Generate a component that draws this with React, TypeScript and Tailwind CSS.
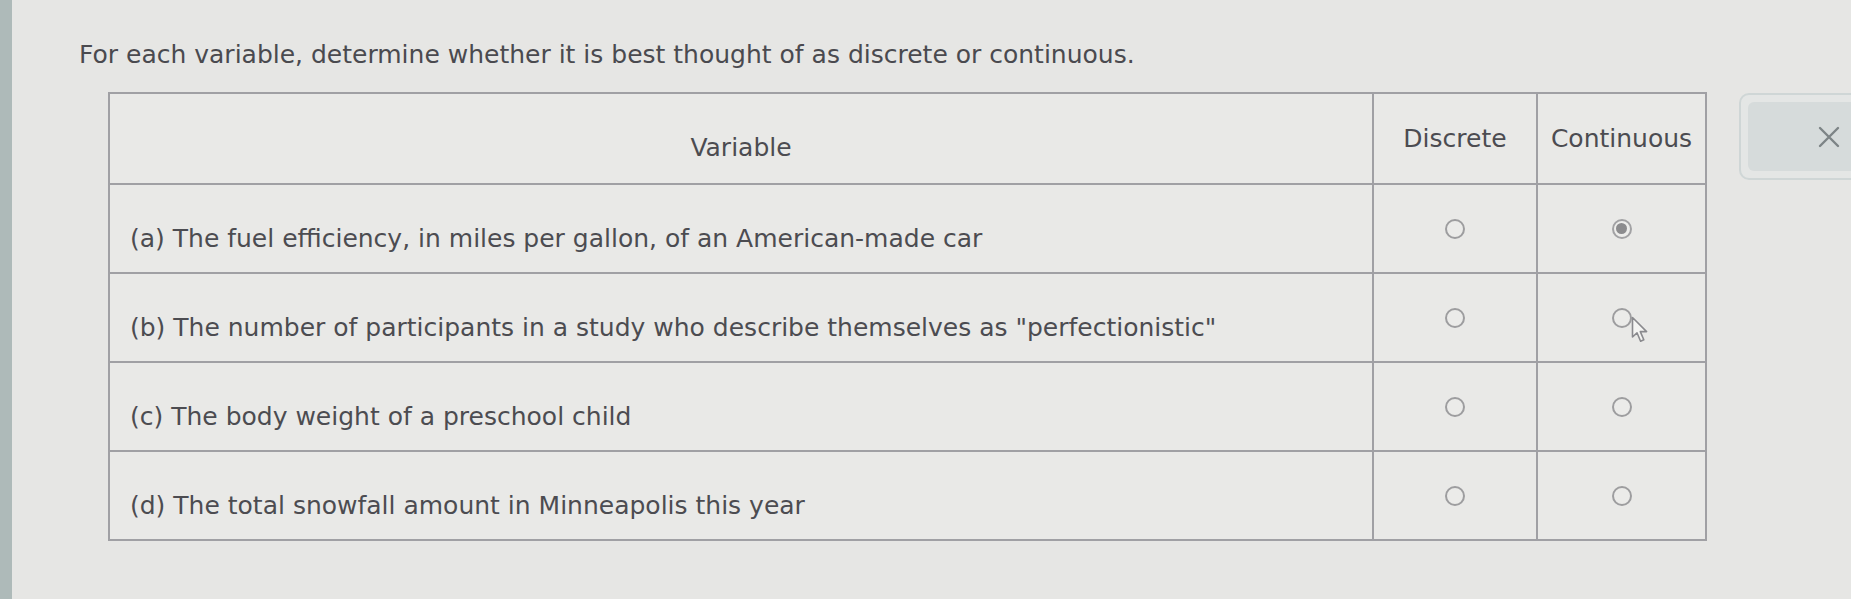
import React from "react";

const font = { fontFamily: '"DejaVu Sans", Verdana, sans-serif' };

const rows = [
  { label: "(a) The fuel efficiency, in miles per gallon, of an American-made car", pick: "continuous" },
  { label: '(b) The number of participants in a study who describe themselves as "perfectionistic"', pick: null, cursor: true },
  { label: "(c) The body weight of a preschool child", pick: null },
  { label: "(d) The total snowfall amount in Minneapolis this year", pick: null },
];

function Radio({ checked }: { checked?: boolean }) {
  if (checked) {
    return (
      <span className="flex h-[20px] w-[20px] items-center justify-center rounded-full border-2 border-[#a2a2a4] bg-[#ededeb]">
        <span className="h-[11px] w-[11px] rounded-full bg-[#8c8c8e]" />
      </span>
    );
  }
  return <span className="block h-[20px] w-[20px] rounded-full border-2 border-[#9d9d9f] bg-[#ebebe9]" />;
}

function Cursor() {
  return (
    <svg width="19" height="28" viewBox="0 0 19 28" className="absolute left-[calc(50%+9px)] top-[calc(50%-2px)]">
      <path
        d="M1.5 1.5 L1.5 21 L6 16.8 L9.6 25.2 L12.8 23.8 L9.3 15.6 L15.6 15.6 Z"
        fill="#f4f4f2"
        stroke="#8a8a8e"
        strokeWidth="1.6"
        strokeLinejoin="round"
      />
    </svg>
  );
}

export default function App() {
  return (
    <div className="relative flex h-[599px] w-[1851px] overflow-hidden bg-[#e6e6e4]" style={font}>
      <div className="w-[12px] shrink-0 bg-[#aebab9]" />
      <div className="flex min-w-0 flex-1 flex-col pl-[67px] pt-[40px]">
        <p className="whitespace-nowrap text-[25px] leading-[30px] text-[#4a4a4f]">
          For each variable, determine whether it is best thought of as discrete or continuous.
        </p>

        <div className="mt-[22px] flex items-start">
          <table className="ml-[29px] shrink-0 border-collapse bg-[#e9e9e7] text-[#4c4c51]">
            <thead>
              <tr className="h-[91px]">
                <th className="w-[1264px] border-2 border-[#a0a0a4] pt-[18px] text-center align-middle text-[25px] font-normal">
                  Variable
                </th>
                <th className="w-[164px] border-2 border-[#a0a0a4] text-center align-middle text-[25px] font-normal">
                  Discrete
                </th>
                <th className="w-[169px] border-2 border-[#a0a0a4] text-center align-middle text-[25px] font-normal">
                  Continuous
                </th>
              </tr>
            </thead>
            <tbody>
              {rows.map((row) => (
                <tr key={row.label} className="h-[89px]">
                  <td className="whitespace-nowrap border-2 border-[#a0a0a4] pl-[20px] pt-[20px] align-middle text-[25px]">
                    {row.label}
                  </td>
                  <td className="border-2 border-[#a0a0a4] align-middle">
                    <div className="flex justify-center">
                      <Radio checked={row.pick === "discrete"} />
                    </div>
                  </td>
                  <td className="relative border-2 border-[#a0a0a4] align-middle">
                    <div className="flex justify-center">
                      <Radio checked={row.pick === "continuous"} />
                    </div>
                    {row.cursor && <Cursor />}
                  </td>
                </tr>
              ))}
            </tbody>
          </table>

          <div className="mt-[1px] ml-[32px] flex h-[87px] w-[130px] shrink-0 items-center rounded-[10px] border-2 border-[#cfd6d6] bg-[#e4e6e5] p-[7px]">
            <div className="flex h-full w-full items-center rounded-[6px] bg-[#d6dbdb] pl-[70px]">
              <svg width="22" height="22" viewBox="0 0 22 22">
                <path d="M2 2 L20 20 M20 2 L2 20" stroke="#7d8486" strokeWidth="2.4" strokeLinecap="round" />
              </svg>
            </div>
          </div>
        </div>
      </div>
    </div>
  );
}
